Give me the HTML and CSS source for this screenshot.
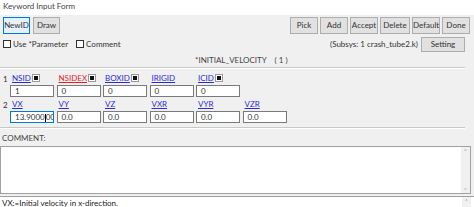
FILE: index.html
```html
<!DOCTYPE html>
<html>

<head>
	<title>
		Keyword Input Form
	</title>

	<link rel="stylesheet" href="styles.css">

</head>

<body>
	<div id="window">
		<div class="titlebar">Keyword Input Form</div>

		<div class="toolbar">
			<div class="left">
				<button class="btn active">NewID</button>
				<button class="btn">Draw</button>
			</div>
			<div class="right">
				<button class="btn">Pick</button>
				<button class="btn">Add</button>
				<button class="btn">Accept</button>
				<button class="btn wide">Delete</button>
				<button class="btn">Default</button>
				<button class="btn">Done</button>
			</div>
		</div>

		<div class="options">
			<div class="left">
				<label class="check"><span class="box"></span>Use *Parameter</label>
				<label class="check"><span class="box"></span>Comment</label>
			</div>
			<div class="right">
				<span class="subsys">(Subsys: 1 crash_tube2.k)</span>
				<button class="btn setting">Setting</button>
			</div>
		</div>

		<div class="heading">*INITIAL_VELOCITY&nbsp;&nbsp;&nbsp;&nbsp;( 1 )</div>
		<div class="sep"></div>

		<div class="card">
			<div class="num">1</div>
			<div class="fields">
				<div class="field"><a class="lbl">NSID</a><span class="pick"></span></div>
				<div class="field"><a class="lbl red">NSIDEX</a><span class="pick"></span></div>
				<div class="field"><a class="lbl">BOXID</a><span class="pick"></span></div>
				<div class="field"><a class="lbl">IRIGID</a></div>
				<div class="field"><a class="lbl">ICID</a><span class="pick"></span></div>
				<div class="field"></div>
				<div class="val">1</div>
				<div class="val">0</div>
				<div class="val">0</div>
				<div class="val">0</div>
				<div class="val">0</div>
			</div>
		</div>

		<div class="card">
			<div class="num">2</div>
			<div class="fields">
				<div class="field"><a class="lbl">VX</a></div>
				<div class="field"><a class="lbl">VY</a></div>
				<div class="field"><a class="lbl">VZ</a></div>
				<div class="field"><a class="lbl">VXR</a></div>
				<div class="field"><a class="lbl">VYR</a></div>
				<div class="field"><a class="lbl">VZR</a></div>
				<div class="val focus">13.9000<span class="caret"></span>00</div>
				<div class="val">0.0</div>
				<div class="val">0.0</div>
				<div class="val">0.0</div>
				<div class="val">0.0</div>
				<div class="val">0.0</div>
			</div>
		</div>

		<div class="sep low"></div>

		<div class="comment-label">COMMENT:</div>
		<div class="comment">
			<div class="scroll">
				<span>&#708;</span>
				<span>&#709;</span>
			</div>
		</div>

		<div class="status">
			<span>VX:=Initial velocity in x-direction.</span>
			<div class="scroll short"><span>&#708;</span></div>
		</div>
	</div>
</body>

</html>
```

FILE: styles.css
```css
body {
	margin: 0;
	background: #f0f0f0;
	font-family: "Lato", "Liberation Sans", sans-serif;
	font-size: 8px;
	color: #333;
}

#window {
	width: 474px;
	height: 207px;
	overflow: hidden;
}

.titlebar {
	height: 15px;
	line-height: 13px;
	padding-left: 3px;
	background: #ffffff;
	color: #444;
}

.toolbar {
	display: flex;
	justify-content: space-between;
	padding: 1px 3px 0 3px;
	height: 18px;
}

.left,
.right {
	display: flex;
	align-items: center;
}

.btn {
	height: 17px;
	width: 28px;
	margin: 0 1px 0 1px;
	padding: 0;
	background: #e1e1e1;
	border: 1px solid #adadad;
	font-family: inherit;
	font-size: 8px;
	color: #333;
}

.toolbar .left .btn {
	width: 27px;
	margin: 0 3px 0 0;
}

.btn.wide {
	width: 30px;
}

.btn.active {
	background: #e5f1fb;
	border: 1px solid #0078d7;
}

.options {
	display: flex;
	justify-content: space-between;
	padding: 0 8px 0 3px;
	height: 20px;
}

.check {
	display: flex;
	align-items: center;
	margin-right: 8px;
}

.box {
	width: 6px;
	height: 6px;
	border: 1px solid #333;
	background: #fff;
	margin-right: 2px;
}

.subsys {
	margin-right: 2px;
}

.btn.setting {
	width: 44px;
	height: 15px;
}

.heading {
	height: 12px;
	line-height: 12px;
	padding-left: 195px;
	color: #444;
}

.sep {
	margin: 1px 9px 2px 0;
	height: 0;
	border-top: 1px solid #c8c8c8;
	border-bottom: 1px solid #ffffff;
}

.sep.low {
	margin-top: 4px;
}

.card {
	display: flex;
	height: 26px;
}

.num {
	width: 10px;
	padding-left: 3px;
	box-sizing: border-box;
	line-height: 14px;
	padding-top: 1px;
}

.fields {
	display: grid;
	grid-template-columns: repeat(6, 44px);
	grid-template-rows: 14px 12px;
	column-gap: 2.5px;
}

.field {
	display: flex;
	align-items: center;
	padding-left: 2px;
}

.lbl {
	color: #2b2bd6;
	text-decoration: underline;
}

.lbl.red {
	color: #e8202a;
}

.pick {
	width: 4px;
	height: 4px;
	margin-left: 2px;
	border: 1px solid #fff;
	outline: 1px solid #999;
	background: #111;
}

.val {
	background: #ffffff;
	border: 1px solid #7a7a7a;
	line-height: 10px;
	padding-left: 4px;
	color: #333;
	white-space: nowrap;
	overflow: hidden;
}

.val.focus {
	border-color: #0078d7;
}

.caret {
	display: inline-block;
	width: 1px;
	height: 8px;
	background: #000;
	vertical-align: middle;
}

.comment-label {
	height: 15px;
	line-height: 14px;
	padding-left: 2px;
	color: #444;
}

.comment {
	display: flex;
	justify-content: flex-end;
	height: 46px;
	margin-right: 3px;
	background: #ffffff;
	border: 1px solid #a0a0a0;
}

.scroll {
	display: flex;
	flex-direction: column;
	justify-content: space-between;
	align-items: center;
	width: 9px;
	background: #f0f0f0;
	color: #a0a0a0;
	font-size: 6px;
	line-height: 7px;
}

.status {
	display: flex;
	justify-content: space-between;
	height: 12px;
	margin-top: 2px;
	background: #ffffff;
	border-top: 1px solid #a0a0a0;
	padding-left: 2px;
	line-height: 12px;
	color: #222;
}

.scroll.short {
	margin-right: 3px;
}
```
